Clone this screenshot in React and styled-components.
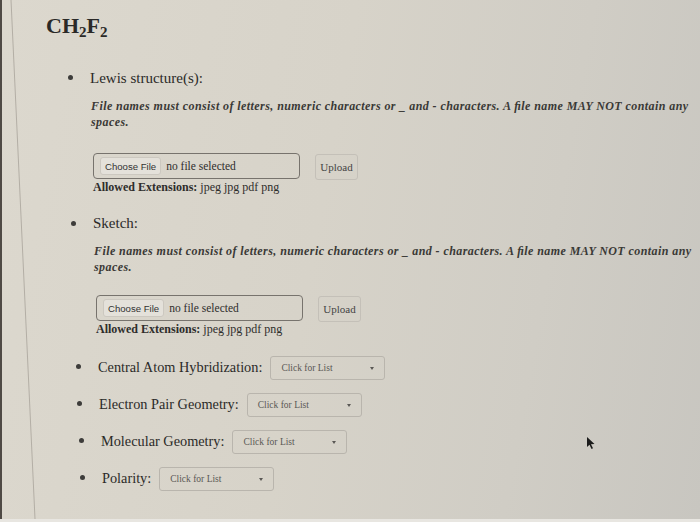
import React from 'react';
import styled, { createGlobalStyle } from 'styled-components';

const GlobalStyle = createGlobalStyle`
  html, body {
    margin: 0;
    padding: 0;
  }
  body {
    width: 700px;
    height: 522px;
    overflow: hidden;
    background: #e8e6e1;
    font-family: "Liberation Serif", "Times New Roman", serif;
    color: #2b2a28;
  }
`;

const Page = styled.div`
  position: relative;
  box-sizing: border-box;
  width: 700px;
  height: 519px;
  border-left: 2px solid #4f4a45;
  padding: 13px 0 0 44px;
  background: linear-gradient(100deg, #dcd8ce 0%, #d7d3c9 45%, #d0cdc5 75%, #c8c6c0 100%);
  overflow: hidden;
`;

const Title = styled.h1`
  margin: 0;
  font-size: 22px;
  line-height: 26px;
  font-weight: bold;
  color: #2a2927;

  sub {
    font-size: 15px;
    line-height: 0;
    vertical-align: -4px;
  }
`;

const Item = styled.div`
  display: grid;
  grid-template-columns: 22px 1fr;
  margin-left: ${(p) => p.$shift}px;
  margin-top: ${(p) => p.$top}px;
`;

const Bullet = styled.span`
  width: 5px;
  height: 5px;
  border-radius: 50%;
  background: #3d3c3a;
  align-self: start;
  margin-top: ${(p) => p.$at}px;
`;

const Content = styled.div`
  display: flex;
  flex-direction: column;
`;

const Heading = styled.div`
  font-size: 15px;
  line-height: 20px;
`;

const Note = styled.p`
  margin: 10px 0 0 1px;
  width: 608px;
  font-size: 12px;
  line-height: 16px;
  font-style: italic;
  font-weight: bold;
  letter-spacing: 0.42px;
  color: #3a3936;
`;

const FileRow = styled.div`
  display: flex;
  align-items: flex-start;
  gap: 15px;
  margin: ${(p) => p.$gap}px 0 0 3px;
`;

const FileBox = styled.div`
  box-sizing: border-box;
  width: 207px;
  height: 26px;
  display: flex;
  align-items: center;
  gap: 5px;
  padding: 0 6px;
  border: 1px solid #77736d;
  border-radius: 4px;
`;

const ChooseButton = styled.span`
  height: 16px;
  display: flex;
  align-items: center;
  padding: 0 4px;
  border: 1px solid #ccc8c0;
  border-radius: 3px;
  background: #e4e1da;
  font-family: "Liberation Sans", Arial, sans-serif;
  font-size: 9.6px;
  color: #333;
`;

const FileName = styled.span`
  font-size: 11.5px;
  color: #2e2d2b;
`;

const UploadButton = styled.div`
  box-sizing: border-box;
  width: 43px;
  height: 26px;
  margin-top: 1px;
  display: flex;
  align-items: center;
  justify-content: center;
  border: 1px solid #c4c0b8;
  border-radius: 3px;
  font-size: 11px;
  color: #444;
`;

const Allowed = styled.div`
  margin-left: 3px;
  font-size: 12px;
  line-height: 14px;
  color: #2e2d2b;

  b {
    font-weight: bold;
  }
`;

const QuestionRow = styled.div`
  display: flex;
  align-items: center;
  gap: 8px;
  height: 24px;
`;

const Label = styled.span`
  font-size: 14.3px;
  line-height: 18px;
  margin-top: -3px;
  color: #2b2a28;
`;

const Select = styled.div`
  box-sizing: border-box;
  width: 115px;
  height: 24px;
  display: flex;
  align-items: center;
  justify-content: space-between;
  padding: 0 10px 0 10px;
  border: 1px solid #b9b5ad;
  border-radius: 3px;
  font-size: 9.5px;
  color: #5a5855;
`;

const Caret = styled.span`
  width: 0;
  height: 0;
  border-left: 2.5px solid transparent;
  border-right: 2.5px solid transparent;
  border-top: 3px solid #5a5855;
`;

const EdgeLine = styled.svg`
  position: absolute;
  left: 0;
  top: 0;
  pointer-events: none;
`;

const Pointer = styled.svg`
  position: absolute;
  left: 584px;
  top: 436px;
`;

function Upload({ gap }) {
  return (
    <>
      <FileRow $gap={gap}>
        <FileBox>
          <ChooseButton>Choose File</ChooseButton>
          <FileName>no file selected</FileName>
        </FileBox>
        <UploadButton>Upload</UploadButton>
      </FileRow>
      <Allowed>
        <b>Allowed Extensions:</b> jpeg jpg pdf png
      </Allowed>
    </>
  );
}

const NOTE =
  'File names must consist of letters, numeric characters or _ and - characters. A ﬁle name MAY NOT contain any spaces.';

const questions = [
  { label: 'Central Atom Hybridization:', shift: 30, top: 20 },
  { label: 'Electron Pair Geometry:', shift: 31, top: 13 },
  { label: 'Molecular Geometry:', shift: 33, top: 13 },
  { label: 'Polarity:', shift: 34, top: 13 },
];

export default function App() {
  return (
    <>
      <GlobalStyle />
      <Page>
        <Title>
          CH<sub>2</sub>F<sub>2</sub>
        </Title>

        <Item $shift={22} $top={29}>
          <Bullet $at={7} />
          <Content>
            <Heading>Lewis structure(s):</Heading>
            <Note>{NOTE}</Note>
            <Upload gap={23} />
          </Content>
        </Item>

        <Item $shift={25} $top={19}>
          <Bullet $at={8} />
          <Content>
            <Heading>Sketch:</Heading>
            <Note>{NOTE}</Note>
            <Upload gap={20} />
          </Content>
        </Item>

        {questions.map((q) => (
          <Item key={q.label} $shift={q.shift} $top={q.top}>
            <Bullet $at={8} />
            <QuestionRow>
              <Label>{q.label}</Label>
              <Select>
                Click for List
                <Caret />
              </Select>
            </QuestionRow>
          </Item>
        ))}

        <EdgeLine width="40" height="519">
          <line x1="9" y1="0" x2="33" y2="519" stroke="#b3aea5" strokeWidth="1" />
        </EdgeLine>
        <Pointer width="10" height="14" viewBox="0 0 10 14">
          <path d="M1 1 L1 11 L3.5 8.8 L5.5 13 L7 12.3 L5 8.2 L8.5 8 Z" fill="#1c1c1c" />
        </Pointer>
      </Page>
    </>
  );
}
